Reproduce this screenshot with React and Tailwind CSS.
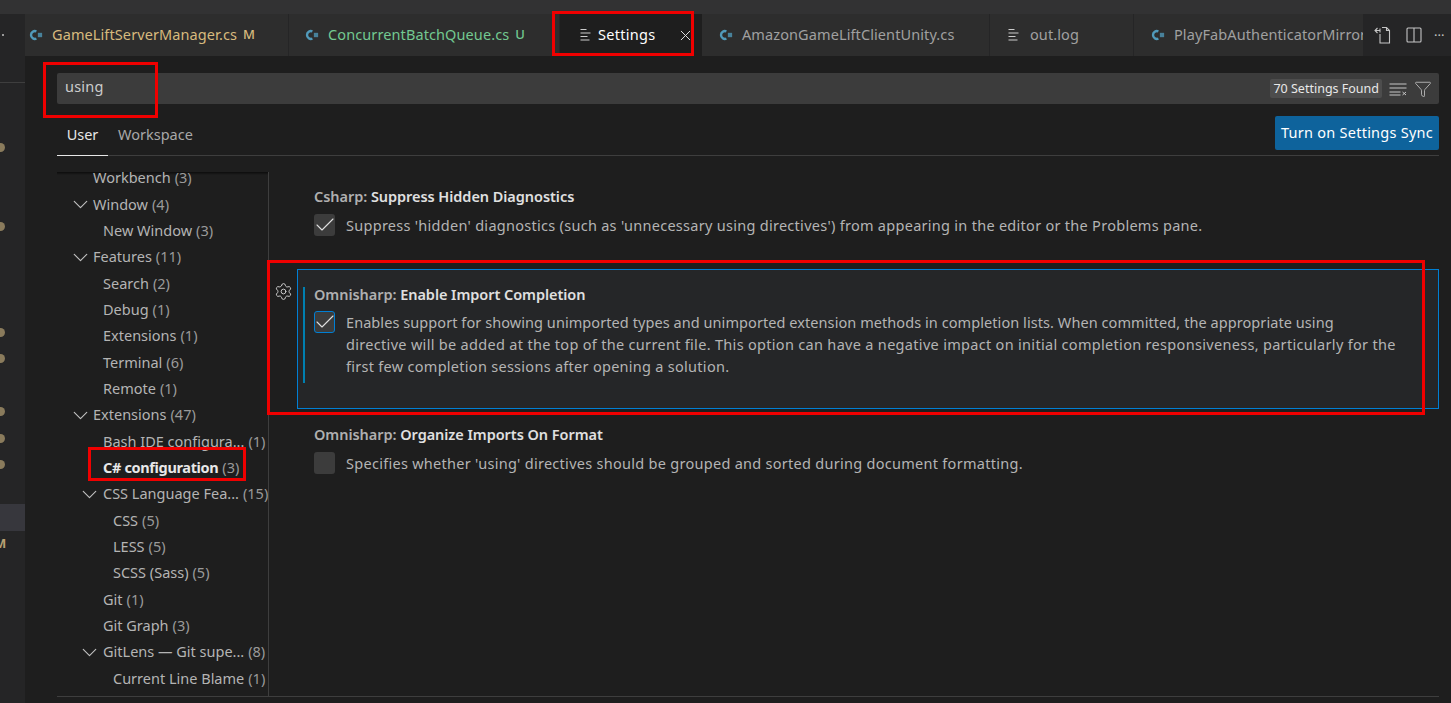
import { Settings, ChevronDown, X, Check, Funnel } from "lucide-react";

const font = { fontFamily: "'Noto Sans', sans-serif" };

function CsIcon() {
  return (
    <svg width="16" height="16" viewBox="0 0 16 16" fill="none" className="shrink-0">
      <path d="M8.4 4.400A3.900 3.900 0 1 0 8.400 11.600" stroke="#519aba" strokeWidth="2.4" />
      <path d="M11 5.800v4.400M13 5.800v4.400M9.800 7h4.400M9.800 9h4.400" stroke="#519aba" strokeWidth="1.1" />
    </svg>
  );
}

function LinesIcon() {
  return (
    <svg width="16" height="16" viewBox="0 0 16 16" fill="none" stroke="#cccccc" strokeWidth="1.1" className="shrink-0">
      <path d="M2.500 2.500h6M2.500 6h10M2.500 9.500h7M2.500 13h9" />
    </svg>
  );
}

function Tab({ icon, label, badge, color, className }) {
  return (
    <div className={`flex h-full items-center border-r border-[#252526] overflow-hidden ${className}`}>
      {icon}
      <span className={`ml-2 whitespace-nowrap text-[14.5px] tracking-[0.1px] ${color}`}>{label}</span>
      {badge && <span className={`ml-[6px] text-[13px] font-medium ${color}`}>{badge}</span>}
    </div>
  );
}

const toc = [
  ["Workbench", "(3)", 0],
  ["Window", "(4)", 0, true],
  ["New Window", "(3)", 1],
  ["Features", "(11)", 0, true],
  ["Search", "(2)", 1],
  ["Debug", "(1)", 1],
  ["Extensions", "(1)", 1],
  ["Terminal", "(6)", 1],
  ["Remote", "(1)", 1],
  ["Extensions", "(47)", 0, true],
  ["Bash IDE configura...", "(1)", 1],
  ["C# configuration", "(3)", 1],
  ["CSS Language Fea...", "(15)", 1, true],
  ["CSS", "(5)", 2],
  ["LESS", "(5)", 2],
  ["SCSS (Sass)", "(5)", 2],
  ["Git", "(1)", 1],
  ["Git Graph", "(3)", 1],
  ["GitLens — Git supe...", "(8)", 1, true],
  ["Current Line Blame", "(1)", 2],
];

const indent = ["pl-[36px]", "pl-[46px]", "pl-[56px]"];

function TocRow({ row }) {
  const [name, count, level, open] = row;
  const bold = name === "C# configuration";
  return (
    <div className={`relative flex h-[26.35px] items-center pr-px text-[14.5px] text-[#b4b4b4] ${indent[level]}`}>
      {open && (
        <ChevronDown
          size={25}
          strokeWidth={1.1}
          className={`absolute text-[#c0c0c0] ${level === 0 ? "left-[10.5px]" : "left-[19.5px]"}`}
        />
      )}
      <span className="flex min-w-0 gap-[4px] whitespace-nowrap">
        <span className={bold ? "font-bold tracking-[-0.35px] text-[#e8e8e8]" : ""}>{name}</span>
        <span className="text-[#9a9a9a]">{count}</span>
      </span>
    </div>
  );
}

function Checkbox({ checked, focused }) {
  return (
    <div
      className={`flex h-[22px] w-[21px] shrink-0 items-center justify-center rounded-[3px] bg-[#3c3c3c] ${
        focused ? "border border-[#007fd4]" : ""
      }`}
    >
      {checked && <Check size={24} strokeWidth={1.1} className="shrink-0 text-[#e0e0e0]" />}
    </div>
  );
}

function Title({ cat, name }) {
  return (
    <div className="text-[14.5px] font-semibold leading-[20px] tracking-[-0.05px] text-[#e0e0e0]">
      <span className="text-[#b0b0b0]">{cat}: </span>
      {name}
    </div>
  );
}

const explorerRows = [
  "dot", null, null, "dot", null, null, null, "dot", "dot", null, "dot", "dot", "dot", null, "sel", "m",
];

export default function App() {
  return (
    <div style={font} className="relative flex h-[703px] w-full flex-col overflow-hidden bg-[#1e1e1e]">
      {/* title bar */}
      <div className="h-[14px] shrink-0 bg-[#323233]" />

      <div className="flex min-h-0 flex-1">
        {/* explorer sliver */}
        <div className="flex w-[25px] shrink-0 flex-col bg-[#252526]">
          <div className="flex h-[42px] items-center">
            <span className="ml-[2px] h-[2px] w-[2px] rounded-full bg-[#c0c0c0]" />
          </div>
          <div className="mt-[26px] h-px bg-[#3e3e3e]" />
          <div className="mt-[51px] flex flex-col">
            {explorerRows.map((r, i) => (
              <div key={i} className={`flex h-[26.45px] items-center ${r === "sel" ? "bg-[#37373d]" : ""}`}>
                {r === "dot" && <span className="-ml-[4px] h-[9px] w-[9px] rounded-full bg-[#8a7b5c]" />}
                {r === "m" && <span className="-ml-[6px] text-[13px] font-bold text-[#b89f72]">M</span>}
              </div>
            ))}
          </div>
        </div>

        {/* editor */}
        <div className="flex min-w-0 flex-1 flex-col">
          {/* tabs */}
          <div className="flex h-[42px] shrink-0 bg-[#2d2d2d]">
            <Tab icon={<CsIcon />} label="GameLiftServerManager.cs" badge="M" color="text-[#d7ba7d]" className="w-[264px] pl-[3px]" />
            <Tab icon={<CsIcon />} label="ConcurrentBatchQueue.cs" badge="U" color="text-[#73c991]" className="w-[271px] pl-[15px]" />
            <div className="flex h-full w-[142px] items-center bg-[#1e1e1e] pl-[18px]">
              <LinesIcon />
              <span className="ml-[4px] text-[14.5px] tracking-[0.3px] text-white">Settings</span>
              <X size={17} strokeWidth={1.4} className="ml-[21px] text-[#e0e0e0]" />
            </div>
            <Tab icon={<CsIcon />} label="AmazonGameLiftClientUnity.cs" color="text-[#a0a0a0]" className="w-[288px] pl-[16px]" />
            <Tab icon={<LinesIcon />} label="out.log" color="text-[#a0a0a0]" className="w-[144px] pl-[16px]" />
            <Tab icon={<CsIcon />} label="PlayFabAuthenticatorMirror.cs" color="text-[#a0a0a0]" className="w-[229px] border-r-0 pl-[16px]" />
            <div className="flex flex-1 items-center bg-[#252526] pl-[10px] text-[#c5c5c5]">
              <svg width="20" height="20" viewBox="0 0 20 20" fill="none" stroke="currentColor" strokeWidth="1.1">
                <path d="M9 2.500h4.500l3 3V18H7V9M13.500 2.500v3h3M2 5.500h5M4.500 3L2 5.500 4.500 8M7 3.500v4" />
              </svg>
              <svg width="18" height="18" viewBox="0 0 18 18" fill="none" stroke="currentColor" strokeWidth="1.1" className="ml-[12px]">
                <rect x="2" y="2" width="14" height="14" rx="1" />
                <path d="M9 2v14" />
              </svg>
              <span className="ml-[11px] whitespace-nowrap text-[13px] leading-none">···</span>
            </div>
          </div>

          {/* settings */}
          <div className="flex min-h-0 flex-1 flex-col pl-[32px] pr-[12px]">
            <div className="mt-[17px] flex h-[31px] shrink-0 items-center justify-between rounded-[2px] bg-[#3c3c3c] pl-[8px] pr-[7px]">
              <span className="-mt-[3px] text-[14.5px] tracking-[0.2px] text-[#cccccc]">using</span>
              <div className="flex items-center">
                <span className="rounded-[2px] bg-[#4d4d4d] px-[3px] text-[12.5px] leading-[19px] text-[#e8e8e8]">70 Settings Found</span>
                <svg width="18" height="16" viewBox="0 0 18 16" fill="none" stroke="#c5c5c5" strokeWidth="1" className="ml-[7px]">
                  <path d="M0.500 3h17M0.500 7h17M0.500 11h11M0.500 14h11M13.500 11l3.500 3M17 11l-3.500 3" />
                </svg>
                <Funnel size={18} strokeWidth={1.1} className="ml-[7px] text-[#c5c5c5]" />
              </div>
            </div>

            <div className="mt-[12px] flex h-[40px] shrink-0 items-start justify-between border-b border-[#3e3e3e]">
              <div className="flex text-[14.5px]">
                <div className="-mb-px flex h-[40px] w-[51px] items-start justify-center border-b border-[#e7e7e7] pt-[8px] text-[#e7e7e7]">User</div>
                <div className="ml-[10px] pt-[8px] text-[#a8a8a8]">Workspace</div>
              </div>
              <div className="flex h-[34px] items-center rounded-[2px] bg-[#0e639c] px-[6px] text-[14.5px] tracking-[0.25px] whitespace-nowrap text-white">Turn on Settings Sync</div>
            </div>

            <div className="mt-[16px] mb-[6px] flex min-h-0 flex-1 border-b border-[#3e3e3e]">
              {/* toc */}
              <div className="relative w-[212px] shrink-0 overflow-hidden border-r border-[#3e3e3e]">
                <div className="absolute inset-x-0 top-0 h-[3px] bg-linear-to-b from-black/60 to-transparent" />
                <div className="-mt-[7px]">
                  {toc.map((row, i) => (
                    <TocRow key={i} row={row} />
                  ))}
                </div>
              </div>

              {/* list */}
              <div className="min-w-0 flex-1 pl-[28px] text-[14.5px] tracking-[0.28px] text-[#b4b4b4]">
                <div className="pl-[17px] pt-[14px]">
                  <Title cat="Csharp" name="Suppress Hidden Diagnostics" />
                  <div className="mt-[8px] flex gap-[11px]">
                    <Checkbox checked />
                    <p className="leading-[22px] whitespace-nowrap">
                      Suppress 'hidden' diagnostics (such as 'unnecessary using directives') from appearing in the editor or the Problems pane.
                    </p>
                  </div>
                </div>

                <div className="relative mt-[33px] h-[140px] border border-[#007fd4] bg-[#252628] pl-[16px] pt-[14px]">
                  <Settings size={19} strokeWidth={1.2} className="absolute -left-[24px] top-[12px] text-[#d0d0d0]" />
                  <div className="absolute left-[5px] top-[17px] h-[96px] w-[2px] bg-[#007fb0]" />
                  <Title cat="Omnisharp" name="Enable Import Completion" />
                  <div className="mt-[7px] flex gap-[11px]">
                    <Checkbox checked focused />
                    <p className="leading-[22px] whitespace-nowrap">
                      <span className="tracking-[0.07px]">
                        Enables support for showing unimported types and unimported extension methods in completion lists. When committed, the appropriate using
                      </span>
                      <br />
                      <span className="tracking-[0.31px]">
                        directive will be added at the top of the current file. This option can have a negative impact on initial completion responsiveness, particularly for the
                      </span>
                      <br />
                      first few completion sessions after opening a solution.
                    </p>
                  </div>
                </div>

                <div className="pl-[17px] pt-[15px]">
                  <Title cat="Omnisharp" name="Organize Imports On Format" />
                  <div className="mt-[8px] flex gap-[11px]">
                    <Checkbox />
                    <p className="leading-[22px] whitespace-nowrap">
                      Specifies whether 'using' directives should be grouped and sorted during document formatting.
                    </p>
                  </div>
                </div>
              </div>
            </div>
          </div>
        </div>
      </div>

      {/* red annotation boxes */}
      <div className="absolute left-[552px] top-[11px] h-[45px] w-[142px] border-[3px] border-[#f00000]" />
      <div className="absolute left-[43px] top-[62px] h-[56px] w-[115px] border-[3px] border-[#f00000]" />
      <div className="absolute left-[88px] top-[447px] h-[34px] w-[158px] border-[3px] border-[#f00000]" />
      <div className="absolute left-[267px] top-[260px] h-[155px] w-[1158px] border-[3px] border-[#f00000]" />
    </div>
  );
}
